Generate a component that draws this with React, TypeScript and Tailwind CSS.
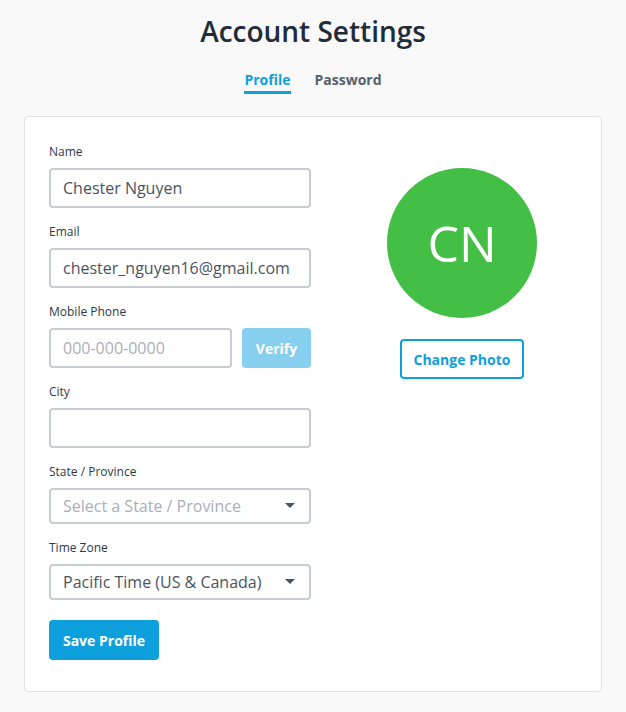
import React from "react";

const font = { fontFamily: '"Open Sans", "Noto Sans", sans-serif' };

function Label({ children }: { children: React.ReactNode }) {
  return <div className="text-[12px] leading-[16px] mb-[8px] text-[#2d3748]">{children}</div>;
}

function Caret() {
  return (
    <svg width="10" height="6" viewBox="0 0 10 6" className="absolute right-[14px] top-1/2 -translate-y-1/2">
      <path d="M0 0 L10 0 L5 5 Z" fill="#4a5361" />
    </svg>
  );
}

export default function App() {
  return (
    <div className="min-h-[712px] bg-[#f9f9f9] px-[24px] pt-[10px]" style={font}>
      <h1 className="text-center text-[28px] leading-[42px] font-semibold text-[#212b3a]">Account Settings</h1>
      <div className="mt-[18px] flex justify-center gap-[24px] text-[14px] font-bold">
        <div className="text-[#0e9fdc] border-b-[3px] border-[#0e9fdc] leading-[20px] pb-[1px]">Profile</div>
        <div className="text-[#56606d] leading-[20px]">Password</div>
      </div>
      <div className="mt-[22px] bg-white border border-[#e3e3e3] rounded-[4px] px-[24px] pt-[27px] pb-[31px] flex">
        <div className="w-[262px]">
          <Label>Name</Label>
          <div className="h-[40px] border-2 border-[#c8ccd3] rounded-[4px] px-[12px] flex items-center text-[16px] text-[#4a5361]">Chester Nguyen</div>
          <div className="mt-[16px]">
            <Label>Email</Label>
            <div className="h-[40px] border-2 border-[#c8ccd3] rounded-[4px] px-[12px] flex items-center text-[16px] text-[#4a5361] whitespace-nowrap">chester_nguyen16@gmail.com</div>
          </div>
          <div className="mt-[16px]">
            <Label>Mobile Phone</Label>
            <div className="flex gap-[10px]">
              <div className="w-[183px] h-[40px] border-2 border-[#c8ccd3] rounded-[4px] px-[12px] flex items-center text-[16px] text-[#a9afb8]">000-000-0000</div>
              <button className="flex-1 h-[40px] rounded-[4px] bg-[#86cfef] text-white font-bold text-[14px]">Verify</button>
            </div>
          </div>
          <div className="mt-[16px]">
            <Label>City</Label>
            <div className="h-[40px] border-2 border-[#c8ccd3] rounded-[4px]" />
          </div>
          <div className="mt-[16px]">
            <Label>State / Province</Label>
            <div className="relative h-[36px] border-2 border-[#c8ccd3] rounded-[4px] px-[12px] flex items-center text-[16px] text-[#a9afb8]">
              Select a State / Province
              <Caret />
            </div>
          </div>
          <div className="mt-[16px]">
            <Label>Time Zone</Label>
            <div className="relative h-[36px] border-2 border-[#c8ccd3] rounded-[4px] px-[12px] flex items-center text-[16px] text-[#4a5361]">
              Pacific Time (US &amp; Canada)
              <Caret />
            </div>
          </div>
          <button className="mt-[20px] h-[40px] w-[110px] rounded-[4px] bg-[#0ea0dc] text-white font-bold text-[14px]">Save Profile</button>
        </div>
        <div className="flex-1 ml-[36px] flex flex-col items-center pt-[24px]">
          <div className="w-[150px] h-[150px] rounded-full bg-[#43bf46] flex items-center justify-center text-white text-[50px] font-normal">CN</div>
          <button className="mt-[21px] h-[40px] w-[124px] rounded-[4px] border-2 border-[#0ea0dc] text-[#0ea0dc] font-bold text-[14px] bg-white">Change Photo</button>
        </div>
      </div>
    </div>
  );
}
